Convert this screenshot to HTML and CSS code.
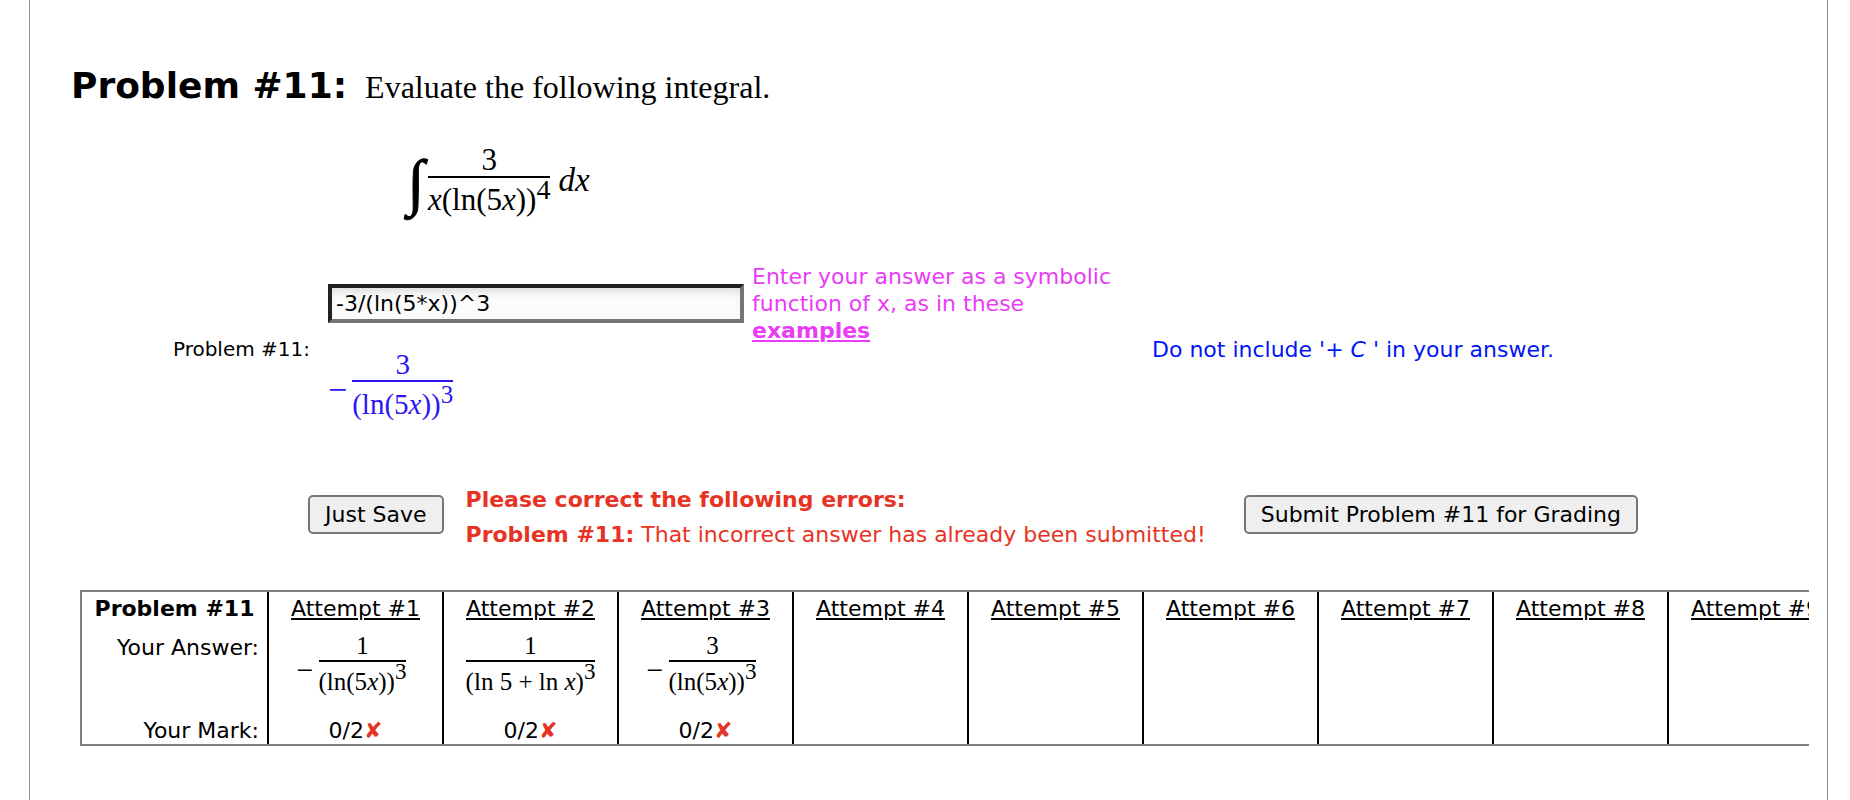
FILE: index.html
```html
<!DOCTYPE html>
<html lang="en">
<head>
<meta charset="utf-8">
<title>Problem #11</title>
<link rel="stylesheet" href="styles.css">
</head>
<body>
<main class="panel">
  <header class="heading">
    <h1 class="heading-title">Problem #11:</h1>
    <p class="heading-text">Evaluate the following integral.</p>
  </header>

  <div class="math integral">
    <span class="integral-sign">∫</span>
    <span class="frac">
      <span class="num">3</span>
      <span class="den"><i>x</i>(ln(5<i>x</i>))<sup>4</sup></span>
    </span>
    <i class="dx">dx</i>
  </div>

  <form class="form">
    <div class="answer">
      <label class="answer-label" for="answer">Problem #11:</label>
      <div class="answer-body">
        <div class="answer-entry">
          <input class="answer-input" id="answer" type="text" value="-3/(ln(5*x))^3">
          <p class="hint">Enter your answer as a symbolic function of x, as in these <a class="hint-link" href="#examples">examples</a></p>
        </div>
        <div class="math preview">
          <span class="minus">−</span>
          <span class="frac">
            <span class="num">3</span>
            <span class="den">(ln(5<i>x</i>))<sup>3</sup></span>
          </span>
        </div>
      </div>
      <p class="note">Do not include '+ <i>C</i> ' in your answer.</p>
    </div>

    <div class="actions">
      <button class="button" type="button">Just Save</button>
      <div class="errors">
        <p class="error"><b>Please correct the following errors:</b></p>
        <p class="error"><b>Problem #11:</b> That incorrect answer has already been submitted!</p>
      </div>
      <button class="button" type="submit">Submit Problem #11 for Grading</button>
    </div>
  </form>

  <div class="history">
    <table class="attempts">
      <thead>
        <tr>
          <th class="corner" scope="col">Problem #11</th>
          <th scope="col">Attempt #1</th>
          <th scope="col">Attempt #2</th>
          <th scope="col">Attempt #3</th>
          <th scope="col">Attempt #4</th>
          <th scope="col">Attempt #5</th>
          <th scope="col">Attempt #6</th>
          <th scope="col">Attempt #7</th>
          <th scope="col">Attempt #8</th>
          <th scope="col">Attempt #9</th>
        </tr>
      </thead>
      <tbody>
        <tr class="answers">
          <th class="row-label" scope="row">Your Answer:</th>
          <td><span class="math small"><span class="minus">−</span><span class="frac"><span class="num">1</span><span class="den">(ln(5<i>x</i>))<sup>3</sup></span></span></span></td>
          <td><span class="math small"><span class="frac"><span class="num">1</span><span class="den">(ln 5 + ln <i>x</i>)<sup>3</sup></span></span></span></td>
          <td><span class="math small"><span class="minus">−</span><span class="frac"><span class="num">3</span><span class="den">(ln(5<i>x</i>))<sup>3</sup></span></span></span></td>
          <td></td><td></td><td></td><td></td><td></td><td></td>
        </tr>
        <tr class="marks">
          <th class="row-label" scope="row">Your Mark:</th>
          <td>0/2<span class="cross">✘</span></td>
          <td>0/2<span class="cross">✘</span></td>
          <td>0/2<span class="cross">✘</span></td>
          <td></td><td></td><td></td><td></td><td></td><td></td>
        </tr>
      </tbody>
    </table>
  </div>
</main>
</body>
</html>
```

FILE: styles.css
```css
* {
  box-sizing: border-box;
}

body {
  margin: 0;
  background: #fff;
  color: #000;
  font-family: Verdana, "DejaVu Sans", sans-serif;
  font-size: 22px;
  line-height: 27px;
}

p,
h1 {
  margin: 0;
}

.panel {
  min-height: 100vh;
  margin: 0 22px 0 29px;
  padding: 64px 18px 40px 41px;
  border: solid #8c8c8c;
  border-width: 0 1px;
}

.heading {
  display: flex;
  align-items: baseline;
  gap: 18px;
}

.heading-title {
  font-size: 36px;
  line-height: 44px;
}

.heading-text {
  font-family: "Liberation Serif", serif;
  font-size: 32px;
}

/* Formulas */
.math {
  display: inline-flex;
  align-items: center;
  font-family: "Liberation Serif", serif;
  font-size: 29px;
  line-height: 32px;
  white-space: nowrap;
}

.frac {
  display: inline-flex;
  flex-direction: column;
  text-align: center;
}

.num {
  border-bottom: 2px solid;
}

.den {
  padding-top: 6px;
}

.math sup {
  font-size: 25px;
  line-height: 0;
  vertical-align: 11px;
}

.minus {
  padding: 12px 5px 0 0;
  font-size: 34px;
}

.integral {
  display: flex;
  margin: 36px 0 0 336px;
  font-size: 31px;
}

.integral sup {
  font-size: 28px;
}

.integral-sign {
  padding: 4px 4px 0 0;
  font-size: 62px;
  font-style: italic;
  font-weight: bold;
  line-height: 60px;
  -webkit-text-stroke: 1px;
}

.dx {
  padding-left: 8px;
  font-size: 33px;
}

.preview {
  margin-top: 4px;
  padding-bottom: 15px;
  color: #2c14f5;
}

.small {
  font-size: 25px;
  line-height: 28px;
}

.small .minus {
  margin-left: -8px;
  font-size: 30px;
}

.small sup {
  font-size: 23px;
}

/* Answer row */
.answer {
  display: grid;
  grid-template-columns: 239px 806px 1fr;
  gap: 18px;
  align-items: center;
  margin-top: 47px;
}

.answer-label {
  font-size: 20px;
  text-align: right;
}

.answer-entry {
  display: flex;
  align-items: center;
  gap: 8px;
}

.answer-input {
  width: 416px;
  height: 39px;
  padding: 0 4px;
  border: 4px solid;
  border-color: #202222 #767676 #767676 #202222;
  background: #fcfcfc;
  box-shadow: inset 0 8px 8px -4px #ddd;
  font: inherit;
}

.hint {
  width: 380px;
  color: #e83cf7;
}

.hint-link {
  color: inherit;
  font-weight: bold;
}

.note {
  color: #0016f5;
}

/* Actions */
.actions {
  display: flex;
  align-items: center;
  margin: 42px 0 0 237px;
}

.button {
  height: 39px;
  padding: 0 15px;
  border: 2px solid #767676;
  border-radius: 5px;
  background: #efefef;
  color: #000;
  font: inherit;
  white-space: nowrap;
}

.errors {
  margin: 0 38px 0 22px;
  padding-top: 5px;
}

.error {
  color: #e73323;
  line-height: 35px;
}

/* Attempt history */
.history {
  margin: 38px 0 0 9px;
  overflow: hidden;
}

.attempts {
  width: 1762px;
  table-layout: fixed;
  border-spacing: 0;
  border: 2px solid #808080;
  text-align: center;
}

.attempts th,
.attempts td {
  width: 175px;
  padding: 0;
  border-left: 2px solid #000;
  vertical-align: top;
}

.attempts thead th {
  height: 38px;
  padding-top: 3px;
  font-weight: normal;
  text-decoration: underline;
}

.attempts th.corner {
  width: 185px;
  border-left: 0;
  font-weight: bold;
  text-decoration: none;
}

.attempts th.row-label {
  padding: 4px 8px 0 0;
  border-left: 0;
  font-weight: normal;
  text-align: right;
}

.answers td {
  height: 83px;
}

.attempts .answers td {
  padding-top: 2px;
}

.attempts .marks th,
.attempts .marks td {
  padding-top: 4px;
}

.cross {
  color: #e73323;
  font-size: 22px;
}
```
